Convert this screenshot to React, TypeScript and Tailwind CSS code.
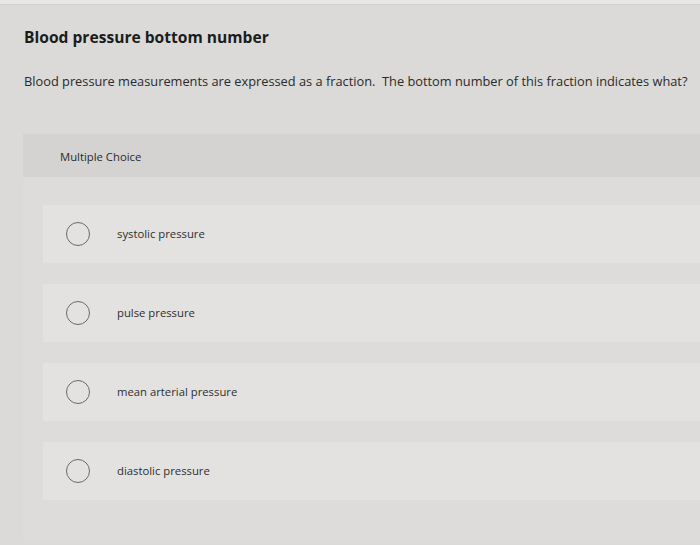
import React from 'react';

const choices = [
  'systolic pressure',
  'pulse pressure',
  'mean arterial pressure',
  'diastolic pressure',
];

const App = () => {
  return (
    <div className="w-[700px] h-[545px] overflow-hidden bg-[#dbdad8] font-['Open_Sans',sans-serif] text-[#2a2a2a]">
      <div className="h-[5px] bg-[#e8e7e5] border-b border-[#d0cfcd]" />

      <div className="pl-6">
        <h1 className="mt-[22px] text-[15.6px] font-bold leading-[20px] text-[#1c1c1c]">
          Blood pressure bottom number
        </h1>
        <p className="mt-[25px] text-[12.8px] leading-[18px]">
          Blood pressure measurements are expressed as a fraction.&nbsp; The bottom number of this fraction indicates what?
        </p>
      </div>

      {/* question panel */}
      <div className="ml-[23px] mt-[44px] bg-[#dddcda]">
        <div className="h-[43px] pl-[37px] pt-[3px] flex items-center bg-[#d4d3d1] text-[11.3px]">
          Multiple Choice
        </div>

        <div className="pl-5 pt-[28px] pb-10 flex flex-col gap-[21px]">
          {choices.map((label) => (
            <div key={label} className="h-[58px] flex items-center bg-[#e3e2e0]">
              <span className="ml-[23px] w-6 h-6 rounded-full border-[1.5px] border-[#6a6a6a] shrink-0" />
              <span className="ml-[27px] text-[11.3px] text-[#2e2e2e]">{label}</span>
            </div>
          ))}
        </div>
      </div>
    </div>
  );
};

export default App;
